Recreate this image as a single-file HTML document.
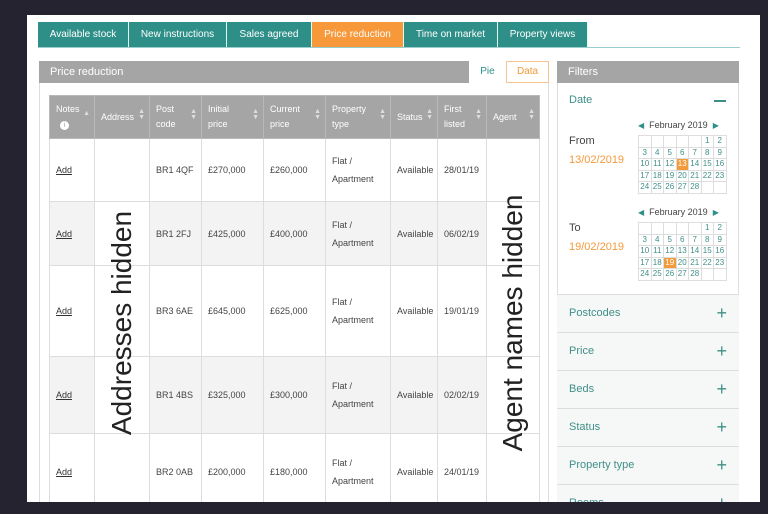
<!DOCTYPE html>
<html><head><style>
*{margin:0;padding:0;box-sizing:border-box}
html,body{width:768px;height:514px;overflow:hidden}
body{background:#24232f;position:relative;font-family:"Liberation Sans",sans-serif;font-size:9px;color:#444}
#wrap{position:absolute;left:0;top:0;width:768px;height:514px;overflow:hidden}
.a{position:absolute}
#pg{left:27px;top:15px;width:733px;height:487px;background:#fff}
.tab{top:22px;height:26px;background:#2e8f88;color:#fff;font-size:10px;line-height:26px;text-align:center;border-right:1px solid #dfe}
.bar{background:#a5a5a5;color:#fff;font-size:11px;line-height:22px;padding-left:11px}
table{border-collapse:collapse;position:absolute;left:49px;top:95px;table-layout:fixed}
td,th{border:1px solid #ddd;font-size:9px;font-weight:normal;text-align:left;padding-left:6px;vertical-align:middle;color:#444}
td{line-height:18px}
th{background:#a5a5a5;color:#fff;height:43px;line-height:15px;position:relative;border-color:#b8b8b8}
th .s{position:absolute;right:4px;top:15px;font-size:7px;color:#ddd;line-height:6px}
.sh td{background:#f3f3f4}
.sh td.w{background:#fff}
u{color:#333}
.rot{position:absolute;font-size:28px;color:#222;white-space:nowrap}
.f{left:557px;width:182px;height:38px;border-top:1px solid #ddd;color:#3f8f88;font-size:11px;line-height:36px;padding-left:12px;background:#f6f7f7}
.f b{position:absolute;right:12px;top:0;font-weight:normal;font-size:18px;color:#3f8f88}
.cal{border-collapse:collapse;position:absolute;table-layout:auto}
.cal td{border:1px solid #ddd;width:12.5px;height:11.5px;padding:0;text-align:center;font-size:8px;color:#3f8f88;line-height:10px}
.cal td.o{background:#f39a3a;color:#fff}
.mh{font-size:9px;color:#444}
.mh i{color:#2e8f88;font-style:normal;font-size:8px}
</style></head><body><div id="wrap">
<div id="pg" class="a"></div>
<div class="a tab" style="left:38px;width:91px">Available stock</div>
<div class="a tab" style="left:129px;width:98px">New instructions</div>
<div class="a tab" style="left:227px;width:85px">Sales agreed</div>
<div class="a tab" style="left:312px;width:92px;background:#f7983a">Price reduction</div>
<div class="a tab" style="left:404px;width:94px">Time on market</div>
<div class="a tab" style="left:498px;width:90px">Property views</div>
<div class="a" style="left:38px;top:47px;width:702px;height:1px;background:#9cc"></div>

<div class="a bar" style="left:39px;top:61px;width:510px;height:22px">Price reduction</div>
<div class="a" style="left:469px;top:61px;width:37px;height:22px;background:#fff;color:#2e8f88;font-size:10px;line-height:22px;text-align:center">Pie</div>
<div class="a" style="left:506px;top:61px;width:43px;height:22px;background:#fff;border:1px solid #f7c48f;color:#f39a3a;font-size:10px;line-height:20px;text-align:center">Data</div>
<div class="a" style="left:39px;top:83px;width:510px;height:419px;border-left:1px solid #ddd;border-right:1px solid #ddd"></div>

<table>
<colgroup><col style="width:45px"><col style="width:55px"><col style="width:52px"><col style="width:62px"><col style="width:62px"><col style="width:65px"><col style="width:47px"><col style="width:49px"><col style="width:53px"></colgroup>
<tr><th>Notes<br><span style="display:inline-block;width:9px;height:9px;border-radius:50%;background:#fff;color:#a5a5a5;font-size:7px;line-height:9px;text-align:center;margin-left:4px">i</span><span class="s">▲</span></th><th>Address<span class="s" style="top:13px">▲<br>▼</span></th><th>Post<br>code<span class="s" style="top:13px">▲<br>▼</span></th><th>Initial<br>price<span class="s" style="top:13px">▲<br>▼</span></th><th>Current<br>price<span class="s" style="top:13px">▲<br>▼</span></th><th>Property<br>type<span class="s" style="top:13px">▲<br>▼</span></th><th>Status<span class="s" style="top:13px">▲<br>▼</span></th><th>First<br>listed<span class="s" style="top:13px">▲<br>▼</span></th><th>Agent<span class="s" style="top:13px">▲<br>▼</span></th></tr>
<tr style="height:63px"><td><u>Add</u></td><td></td><td>BR1 4QF</td><td>£270,000</td><td>£260,000</td><td>Flat /<br>Apartment</td><td>Available</td><td>28/01/19</td><td></td></tr>
<tr class="sh" style="height:64px"><td><u>Add</u></td><td class="w"></td><td>BR1 2FJ</td><td>£425,000</td><td>£400,000</td><td>Flat /<br>Apartment</td><td>Available</td><td>06/02/19</td><td class="w"></td></tr>
<tr style="height:91px"><td><u>Add</u></td><td></td><td>BR3 6AE</td><td>£645,000</td><td>£625,000</td><td>Flat /<br>Apartment</td><td>Available</td><td>19/01/19</td><td></td></tr>
<tr class="sh" style="height:77px"><td><u>Add</u></td><td class="w"></td><td>BR1 4BS</td><td>£325,000</td><td>£300,000</td><td>Flat /<br>Apartment</td><td>Available</td><td>02/02/19</td><td class="w"></td></tr>
<tr style="height:77px"><td><u>Add</u></td><td></td><td>BR2 0AB</td><td>£200,000</td><td>£180,000</td><td>Flat /<br>Apartment</td><td>Available</td><td>24/01/19</td><td></td></tr>
</table>
<div class="rot" style="left:122px;top:323px;transform:translate(-50%,-50%) rotate(-90deg)">Addresses hidden</div>
<div class="rot" style="left:513px;top:323px;transform:translate(-50%,-50%) rotate(-90deg)">Agent names hidden</div>

<div class="a bar" style="left:557px;top:61px;width:182px;height:22px">Filters</div>
<div class="a" style="left:557px;top:83px;width:182px;height:419px;border:1px solid #ddd;border-top:none"></div>
<div class="a" style="left:569px;top:94px;color:#3f8f88;font-size:11px">Date</div>
<div class="a" style="left:714px;top:100px;width:12px;height:1.5px;background:#3f8f88"></div>
<div class="a" style="left:569px;top:135px;font-size:11px;color:#444">From</div>
<div class="a" style="left:569px;top:154px;font-size:11px;color:#f39a3a">13/02/2019</div>
<div class="a" style="left:569px;top:222px;font-size:11px;color:#444">To</div>
<div class="a" style="left:569px;top:241px;font-size:11px;color:#f39a3a">19/02/2019</div>
<div class="a mh" style="left:638px;top:120px"><i>◀</i>&nbsp; February 2019 &nbsp;<i>▶</i></div>
<div class="a mh" style="left:638px;top:207px"><i>◀</i>&nbsp; February 2019 &nbsp;<i>▶</i></div>
<table class="cal" style="left:638px;top:135px">
<tr><td></td><td></td><td></td><td></td><td></td><td>1</td><td>2</td></tr>
<tr><td>3</td><td>4</td><td>5</td><td>6</td><td>7</td><td>8</td><td>9</td></tr>
<tr><td>10</td><td>11</td><td>12</td><td class="o">13</td><td>14</td><td>15</td><td>16</td></tr>
<tr><td>17</td><td>18</td><td>19</td><td>20</td><td>21</td><td>22</td><td>23</td></tr>
<tr><td>24</td><td>25</td><td>26</td><td>27</td><td>28</td><td></td><td></td></tr>
</table>
<table class="cal" style="left:638px;top:222px">
<tr><td></td><td></td><td></td><td></td><td></td><td>1</td><td>2</td></tr>
<tr><td>3</td><td>4</td><td>5</td><td>6</td><td>7</td><td>8</td><td>9</td></tr>
<tr><td>10</td><td>11</td><td>12</td><td>13</td><td>14</td><td>15</td><td>16</td></tr>
<tr><td>17</td><td>18</td><td class="o">19</td><td>20</td><td>21</td><td>22</td><td>23</td></tr>
<tr><td>24</td><td>25</td><td>26</td><td>27</td><td>28</td><td></td><td></td></tr>
</table>
<div class="a f" style="top:294px">Postcodes<b>+</b></div>
<div class="a f" style="top:332px">Price<b>+</b></div>
<div class="a f" style="top:370px">Beds<b>+</b></div>
<div class="a f" style="top:408px">Status<b>+</b></div>
<div class="a f" style="top:446px">Property type<b>+</b></div>
<div class="a f" style="top:484px;height:18px">Rooms<b>+</b></div>
<div class="a" style="left:0;top:502px;width:768px;height:12px;background:#24232f"></div>
</div></body></html>
